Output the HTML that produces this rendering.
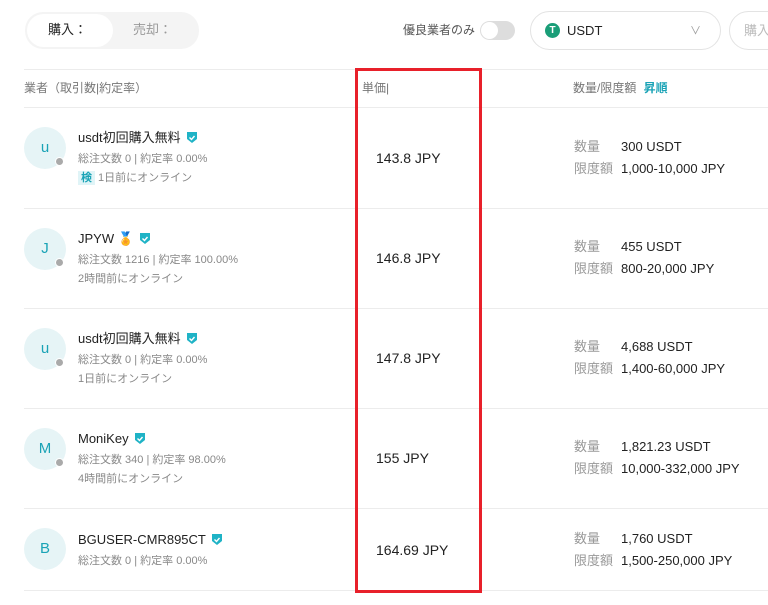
<!DOCTYPE html>
<html><head><meta charset="utf-8"><style>
*{margin:0;padding:0;box-sizing:border-box}
body{width:768px;height:605px;overflow:hidden;background:#fff;font-family:"Liberation Sans","Noto Sans CJK JP",sans-serif;color:#222;position:relative}
.a{position:absolute;white-space:nowrap;line-height:16px}
.line{position:absolute;left:24px;right:0;height:1px;background:#ececec}
.av{position:absolute;left:24px;width:42px;height:42px;border-radius:50%;background:#e6f4f6;color:#1aa3b6;font-size:15px;text-align:center;line-height:42px}
.dot{position:absolute;width:9px;height:9px;border-radius:50%;background:#aaa;border:1px solid #fff}
.nm{font-size:13px;color:#222}
.sub{font-size:11px;color:#888}
.pr{font-size:14px;color:#222}
.lb{font-size:13px;color:#999}
.vl{font-size:13px;color:#222}
.sh{display:inline-block;vertical-align:-2px;margin-left:5px}
</style></head><body>
<div class="a" style="left:25px;top:12px;width:174px;height:37px;border-radius:18px;background:#f4f4f4"></div>
<div class="a" style="left:27px;top:14px;width:86px;height:33px;border-radius:17px;background:#fff"></div>
<div class="a" style="left:48px;top:22px;font-size:13px;color:#222">購入：</div>
<div class="a" style="left:133px;top:22px;font-size:13px;color:#999">売却：</div>
<div class="a" style="left:403px;top:22px;font-size:12px;color:#555">優良業者のみ</div>
<div class="a" style="left:480px;top:21px;width:35px;height:19px;border-radius:10px;background:#ddd"></div>
<div class="a" style="left:481px;top:22px;width:17px;height:17px;border-radius:50%;background:#fff"></div>
<div class="a" style="left:530px;top:11px;width:191px;height:39px;border-radius:20px;border:1px solid #e3e3e3"></div>
<div class="a" style="left:545px;top:23px;width:15px;height:15px;border-radius:50%;background:#1a9e78;color:#fff;font-size:10px;font-weight:bold;text-align:center;line-height:15px">T</div>
<div class="a" style="left:567px;top:23px;font-size:13px;color:#222">USDT</div>
<div class="a" style="left:690px;top:23px;font-size:11px;color:#999">∨</div>
<div class="a" style="left:729px;top:11px;width:60px;height:39px;border-radius:20px;border:1px solid #e3e3e3"></div>
<div class="a" style="left:744px;top:23px;font-size:13px;color:#bbb">購入</div>
<div class="line" style="top:69px"></div>
<div class="a" style="left:24px;top:80px;font-size:12px;color:#777">業者（取引数|約定率）</div>
<div class="a" style="left:362px;top:80px;font-size:12px;color:#777">単価|</div>
<div class="a" style="left:573px;top:80px;font-size:12px;color:#777">数量/限度額 <span style="color:#1aa3b6;font-weight:bold;margin-left:4px">昇順</span></div>
<div class="line" style="top:107px"></div>
<div class="line" style="top:208px"></div>
<div class="line" style="top:308px"></div>
<div class="line" style="top:408px"></div>
<div class="line" style="top:508px"></div>
<div class="line" style="top:590px"></div>

<!-- row1 -->
<div class="av" style="top:127px">u</div><div class="dot" style="left:55px;top:157px"></div>
<div class="a nm" style="left:78px;top:130px">usdt初回購入無料<svg class="sh" width="12" height="13" viewBox="0 0 12 13"><path d="M1 1h10v7l-5 4-5-4z" fill="#1fb3c6"/><path d="M3.5 6.5l2 2 3-3.5" stroke="#fff" stroke-width="1.4" fill="none"/></svg></div>
<div class="a sub" style="left:78px;top:151px">総注文数 0 | 約定率 0.00%</div>
<div class="a sub" style="left:78px;top:170px"><span style="background:#e0f4f7;color:#1aa3b6;font-weight:bold;padding:1px 3px">検</span> 1日前にオンライン</div>
<div class="a pr" style="left:376px;top:150px">143.8 JPY</div>
<div class="a lb" style="left:574px;top:139px">数量</div><div class="a vl" style="left:621px;top:139px">300 USDT</div>
<div class="a lb" style="left:574px;top:161px">限度額</div><div class="a vl" style="left:621px;top:161px">1,000-10,000 JPY</div>

<!-- row2 -->
<div class="av" style="top:228px">J</div><div class="dot" style="left:55px;top:258px"></div>
<div class="a nm" style="left:78px;top:231px">JPYW <span style="color:#d9a520">🏅</span><svg class="sh" width="12" height="13" viewBox="0 0 12 13"><path d="M1 1h10v7l-5 4-5-4z" fill="#1fb3c6"/><path d="M3.5 6.5l2 2 3-3.5" stroke="#fff" stroke-width="1.4" fill="none"/></svg></div>
<div class="a sub" style="left:78px;top:252px">総注文数 1216 | 約定率 100.00%</div>
<div class="a sub" style="left:78px;top:271px">2時間前にオンライン</div>
<div class="a pr" style="left:376px;top:250px">146.8 JPY</div>
<div class="a lb" style="left:574px;top:239px">数量</div><div class="a vl" style="left:621px;top:239px">455 USDT</div>
<div class="a lb" style="left:574px;top:261px">限度額</div><div class="a vl" style="left:621px;top:261px">800-20,000 JPY</div>

<!-- row3 -->
<div class="av" style="top:328px">u</div><div class="dot" style="left:55px;top:358px"></div>
<div class="a nm" style="left:78px;top:331px">usdt初回購入無料<svg class="sh" width="12" height="13" viewBox="0 0 12 13"><path d="M1 1h10v7l-5 4-5-4z" fill="#1fb3c6"/><path d="M3.5 6.5l2 2 3-3.5" stroke="#fff" stroke-width="1.4" fill="none"/></svg></div>
<div class="a sub" style="left:78px;top:352px">総注文数 0 | 約定率 0.00%</div>
<div class="a sub" style="left:78px;top:371px">1日前にオンライン</div>
<div class="a pr" style="left:376px;top:350px">147.8 JPY</div>
<div class="a lb" style="left:574px;top:339px">数量</div><div class="a vl" style="left:621px;top:339px">4,688 USDT</div>
<div class="a lb" style="left:574px;top:361px">限度額</div><div class="a vl" style="left:621px;top:361px">1,400-60,000 JPY</div>

<!-- row4 -->
<div class="av" style="top:428px">M</div><div class="dot" style="left:55px;top:458px"></div>
<div class="a nm" style="left:78px;top:431px">MoniKey<svg class="sh" width="12" height="13" viewBox="0 0 12 13"><path d="M1 1h10v7l-5 4-5-4z" fill="#1fb3c6"/><path d="M3.5 6.5l2 2 3-3.5" stroke="#fff" stroke-width="1.4" fill="none"/></svg></div>
<div class="a sub" style="left:78px;top:452px">総注文数 340 | 約定率 98.00%</div>
<div class="a sub" style="left:78px;top:471px">4時間前にオンライン</div>
<div class="a pr" style="left:376px;top:450px">155 JPY</div>
<div class="a lb" style="left:574px;top:439px">数量</div><div class="a vl" style="left:621px;top:439px">1,821.23 USDT</div>
<div class="a lb" style="left:574px;top:461px">限度額</div><div class="a vl" style="left:621px;top:461px">10,000-332,000 JPY</div>

<!-- row5 -->
<div class="av" style="top:528px">B</div>
<div class="a nm" style="left:78px;top:532px">BGUSER-CMR895CT<svg class="sh" width="12" height="13" viewBox="0 0 12 13"><path d="M1 1h10v7l-5 4-5-4z" fill="#1fb3c6"/><path d="M3.5 6.5l2 2 3-3.5" stroke="#fff" stroke-width="1.4" fill="none"/></svg></div>
<div class="a sub" style="left:78px;top:553px">総注文数 0 | 約定率 0.00%</div>
<div class="a pr" style="left:376px;top:542px">164.69 JPY</div>
<div class="a lb" style="left:574px;top:531px">数量</div><div class="a vl" style="left:621px;top:531px">1,760 USDT</div>
<div class="a lb" style="left:574px;top:553px">限度額</div><div class="a vl" style="left:621px;top:553px">1,500-250,000 JPY</div>

<div class="a" style="left:355px;top:68px;width:127px;height:525px;border:3px solid #e8202a"></div>
</body></html>
